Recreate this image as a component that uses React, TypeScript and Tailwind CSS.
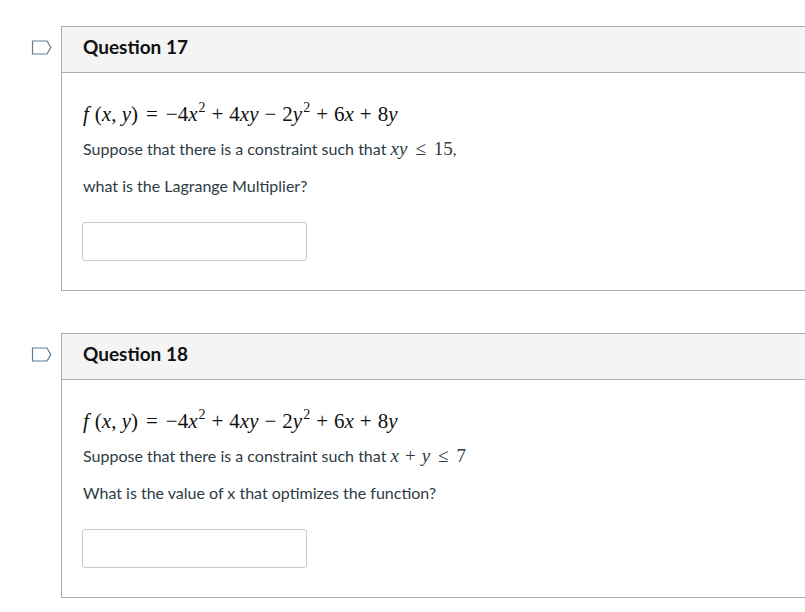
import type { ReactNode } from "react";

const mathFont = { fontFamily: '"Liberation Serif", "DejaVu Serif", serif' };

function V({ children }: { children: ReactNode }) {
  return <i className="italic">{children}</i>;
}

function Bin({ children }: { children: ReactNode }) {
  return <span className="mx-[6px]">{children}</span>;
}

function Rel({ children }: { children: ReactNode }) {
  return <span className="mx-[8px]">{children}</span>;
}

function Sup({ children }: { children: ReactNode }) {
  return <sup className="relative -top-[1px] ml-[1px] text-[14px] align-super leading-none">{children}</sup>;
}

function Formula() {
  return (
    <div className="h-[24px] text-[21px] leading-[24px] text-[#111]" style={mathFont}>
      <V>f</V>
      <span className="ml-[6px]">(</span>
      <V>x</V>, <V>y</V>)
      <Rel>=</Rel>−4<V>x</V>
      <Sup>2</Sup>
      <Bin>+</Bin>4<V>xy</V>
      <Bin>−</Bin>2<V>y</V>
      <Sup>2</Sup>
      <Bin>+</Bin>6<V>x</V>
      <Bin>+</Bin>8<V>y</V>
    </div>
  );
}

function FlagIcon() {
  return (
    <svg width="21" height="16" viewBox="0 0 21 16" className="mt-[14px] ml-[31px]">
      <path d="M1.5 1 H16 L19.8 7.5 L16 14 H1.5 Z" fill="none" stroke="#5c7c96" strokeWidth="1.2" />
    </svg>
  );
}

function Question({
  num,
  constraint,
  prompt,
}: {
  num: number;
  constraint: ReactNode;
  prompt: string;
}) {
  return (
    <div className="flex">
      <div className="w-[61px] shrink-0">
        <FlagIcon />
      </div>
      <div className="-mr-[4px] flex-1 border border-[#ababab]">
        <div className="flex h-[46px] items-center border-b border-[#ababab] bg-[#f4f4f4] pb-[4px] pl-[21px]">
          <h2 className="text-[19px] font-bold text-[#111]">Question {num}</h2>
        </div>
        <div className="pl-[21px] pt-[29px] pb-[29px] text-[16px] text-[#2d3b45]">
          <Formula />
          <p className="mt-[12px] h-[22px] leading-[22px]">
            Suppose that there is a constraint such that{" "}
            <span className="text-[19px]" style={mathFont}>
              {constraint}
            </span>
          </p>
          <p className="mt-[15px] h-[22px] leading-[22px]">{prompt}</p>
          <input
            type="text"
            className="-ml-[1px] mt-[25px] block h-[39px] w-[225px] rounded-[3px] border border-[#c9c9c9] bg-white"
          />
        </div>
      </div>
    </div>
  );
}

export default function App() {
  return (
    <div className="h-[612px] w-[805px] overflow-hidden bg-white pt-[26px]" style={{ fontFamily: "Lato, sans-serif" }}>
      <div className="flex flex-col gap-[42px]">
        <Question
          num={17}
          constraint={
            <>
              <V>xy</V>
              <Rel>≤</Rel>15
              <span style={{ fontFamily: "Lato, sans-serif" }} className="text-[16px]">,</span>
            </>
          }
          prompt="what is the Lagrange Multiplier?"
        />
        <Question
          num={18}
          constraint={
            <>
              <V>x</V>
              <Bin>+</Bin>
              <V>y</V>
              <Rel>≤</Rel>7
            </>
          }
          prompt="What is the value of x that optimizes the function?"
        />
      </div>
    </div>
  );
}
